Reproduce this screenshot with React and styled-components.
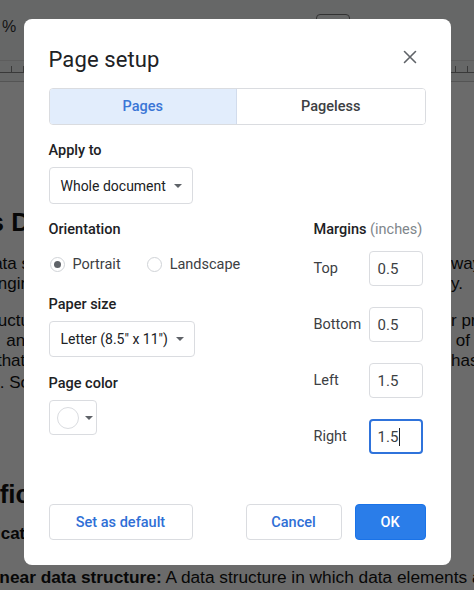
import React from "react";
import styled, { createGlobalStyle } from "styled-components";

const GlobalStyle = createGlobalStyle`
  html, body {
    margin: 0;
    padding: 0;
    background: #fff;
  }
  * {
    box-sizing: border-box;
  }
`;

const Screen = styled.div`
  position: relative;
  width: 474px;
  height: 590px;
  overflow: hidden;
  background: #fff;
  font-family: "Liberation Sans", Arial, sans-serif;
`;

/* ---------- document behind the dialog ---------- */

const Toolbar = styled.div`
  height: 60px;
  background: #f3f5f6;
  display: flex;
  align-items: flex-start;
  padding: 18px 0 0 2px;
  gap: 300px;
  font-size: 16px;
  color: #333;
`;

const ToolButton = styled.div`
  width: 34px;
  height: 24px;
  margin-top: -4px;
  border: 1px solid #777;
  border-radius: 4px;
`;

const Ruler = styled.div`
  height: 22px;
  background: #f3f5f6;
  border-top: 1px solid #ddd;
  border-bottom: 1px solid #c8c8c8;
  position: relative;
  &:after {
    content: "";
    position: absolute;
    left: 0;
    right: 0;
    top: 5px;
    height: 6px;
    border-bottom: 1px solid #888;
    background: repeating-linear-gradient(
      90deg,
      transparent 0 11px,
      #888 11px 12px
    );
  }
`;

const DocBody = styled.div`
  display: flex;
  flex-direction: column;
  color: #111;
  font-size: 17px;
  padding-top: 137px;
`;

const Line = styled.div`
  display: flex;
  justify-content: space-between;
  height: ${(p) => p.h || 20}px;
  margin-top: ${(p) => p.mt || 0}px;
  font-size: ${(p) => p.size || 17}px;
  font-weight: ${(p) => (p.bold ? 700 : 400)};
  line-height: ${(p) => p.h || 20}px;
`;

const LeftBit = styled.span`
  width: 30px;
  display: flex;
  justify-content: flex-end;
  overflow: hidden;
  white-space: pre;
`;

const RightBit = styled.span`
  width: 23px;
  overflow: hidden;
  white-space: pre;
`;

const FullLine = styled.div`
  margin-top: ${(p) => p.mt || 0}px;
  margin-left: -16px;
  white-space: nowrap;
  font-size: 17.3px;
  line-height: 20px;
  b {
    font-weight: 700;
  }
`;

/* ---------- modal ---------- */

const Scrim = styled.div`
  position: absolute;
  inset: 0;
  background: rgba(0, 0, 0, 0.58);
  display: flex;
  justify-content: center;
  align-items: flex-start;
  padding-top: 19px;
`;

const Dialog = styled.div`
  width: 427px;
  height: 546px;
  background: #fff;
  border-radius: 8px;
  padding: 24px 25px 25px;
  display: flex;
  flex-direction: column;
  font-family: Roboto, "Noto Sans", sans-serif;
  color: #202124;
`;

const Header = styled.div`
  display: flex;
  justify-content: space-between;
  align-items: center;
  height: 32px;
`;

const Title = styled.h1`
  margin: 0;
  font-size: 22px;
  font-weight: 400;
  letter-spacing: 0.1px;
`;

const CloseButton = styled.button`
  border: none;
  background: none;
  padding: 0;
  width: 24px;
  height: 24px;
  margin-right: 4px;
  margin-top: -4px;
  display: flex;
  align-items: center;
  justify-content: center;
  cursor: pointer;
`;

const Tabs = styled.div`
  display: grid;
  grid-template-columns: 1fr 1fr;
  height: 37px;
  margin-top: 13px;
  border: 1px solid #dadce0;
  border-radius: 4px;
  overflow: hidden;
`;

const Tab = styled.div`
  display: flex;
  align-items: center;
  justify-content: center;
  font-size: 14.5px;
  font-weight: 500;
  color: ${(p) => (p.active ? "#3a76d6" : "#3c4043")};
  background: ${(p) => (p.active ? "#e2edfc" : "#fff")};
  border-right: ${(p) => (p.active ? "1px solid #d2dcec" : "none")};
`;

const Body = styled.div`
  display: grid;
  grid-template-columns: 265px 1fr;
  margin-top: 16px;
`;

const Column = styled.div`
  display: flex;
  flex-direction: column;
`;

const Label = styled.div`
  font-size: 14.5px;
  font-weight: 500;
  line-height: 20px;
  margin-top: ${(p) => p.mt || 0}px;
  color: #202124;
  span {
    font-weight: 400;
    color: #80868b;
  }
`;

const Select = styled.div`
  display: inline-flex;
  align-self: flex-start;
  align-items: center;
  gap: 8px;
  height: ${(p) => p.h || 37}px;
  margin-top: 6px;
  padding: 0 10px 0 11px;
  border: 1px solid #dadce0;
  border-radius: 4px;
  font-size: 14px;
  color: #202124;
`;

const Caret = styled.span`
  width: 0;
  height: 0;
  border-left: 4px solid transparent;
  border-right: 4px solid transparent;
  border-top: 4px solid #5f6368;
`;

const RadioRow = styled.div`
  display: flex;
  align-items: center;
  height: 20px;
  margin-top: 14px;
  padding-left: 1px;
`;

const RadioOption = styled.label`
  display: flex;
  align-items: center;
  gap: 8px;
  margin-right: 26px;
  font-size: 14.5px;
  color: #3c4043;
`;

const RadioCircle = styled.span`
  width: 15px;
  height: 15px;
  border-radius: 50%;
  border: 1px solid #d0d3d7;
  display: flex;
  align-items: center;
  justify-content: center;
  &:after {
    content: "";
    width: 7px;
    height: 7px;
    border-radius: 50%;
    background: ${(p) => (p.checked ? "#5f6368" : "transparent")};
  }
`;

const ColorButton = styled.div`
  display: flex;
  align-items: center;
  gap: 6px;
  width: 48px;
  height: 35px;
  margin-top: 6px;
  padding-left: 7px;
  border: 1px solid #dadce0;
  border-radius: 4px;
`;

const Swatch = styled.span`
  width: 22px;
  height: 22px;
  border-radius: 50%;
  border: 1px solid #dadce0;
  background: #fff;
`;

const MarginRow = styled.div`
  display: flex;
  align-items: center;
  margin-top: ${(p) => (p.first ? 11 : 21)}px;
`;

const MarginLabel = styled.span`
  width: 55px;
  font-size: 14.5px;
  color: #3c4043;
`;

const Field = styled.div`
  width: 54px;
  height: 35px;
  display: flex;
  align-items: center;
  padding-left: ${(p) => (p.focused ? 7 : 8)}px;
  border: ${(p) => (p.focused ? "2px solid #2f73db" : "1px solid #dadce0")};
  border-radius: 4px;
  font-size: 15px;
  color: #3c4043;
`;

const TextCursor = styled.span`
  width: 1px;
  height: 18px;
  margin-left: 1px;
  background: #202124;
`;

const Footer = styled.div`
  margin-top: auto;
  display: flex;
  align-items: center;
  gap: 13px;
`;

const Button = styled.button`
  height: 36px;
  width: ${(p) => p.w}px;
  border-radius: 4px;
  font-family: Roboto, "Noto Sans", sans-serif;
  font-size: 14.5px;
  font-weight: 500;
  cursor: pointer;
  border: 1px solid ${(p) => (p.primary ? "#1a73e8" : "#dadce0")};
  background: ${(p) => (p.primary ? "#2a7de9" : "#fff")};
  color: ${(p) => (p.primary ? "#fff" : "#2f6fd6")};
  margin-right: ${(p) => (p.push ? "auto" : "0")};
`;

const margins = [
  { label: "Top", value: "0.5" },
  { label: "Bottom", value: "0.5" },
  { label: "Left", value: "1.5" },
  { label: "Right", value: "1.5", focused: true },
];

const App = () => {
  return (
    <>
      <GlobalStyle />
      <Screen>
        <Toolbar>
          <span>%</span>
          <ToolButton />
        </Toolbar>
        <Ruler />
        <DocBody>
          <Line h={30} size={26} bold style={{ marginTop: -12 }}>
            <LeftBit>es D</LeftBit>
            <RightBit />
          </Line>
          <Line mt={17}>
            <LeftBit>data s</LeftBit>
            <RightBit>ways</RightBit>
          </Line>
          <Line>
            <LeftBit>engin</LeftBit>
            <RightBit>y.</RightBit>
          </Line>
          <Line mt={17}>
            <LeftBit>structu</LeftBit>
            <RightBit>r pre</RightBit>
          </Line>
          <Line>
            <LeftBit>{" an "}</LeftBit>
            <RightBit>{" of d"}</RightBit>
          </Line>
          <Line>
            <LeftBit>{" that "}</LeftBit>
            <RightBit>has</RightBit>
          </Line>
          <Line mt={2}>
            <LeftBit>{"ed. So"}</LeftBit>
            <RightBit />
          </Line>
          <Line h={30} size={26} bold mt={86}>
            <LeftBit>{"ific"}</LeftBit>
            <RightBit />
          </Line>
          <Line bold mt={15}>
            <LeftBit>{"icati"}</LeftBit>
            <RightBit />
          </Line>
          <FullLine mt={23}>
            <b>Linear data structure:</b> A data structure in which data elements are
          </FullLine>
        </DocBody>

        <Scrim>
          <Dialog>
            <Header>
              <Title>Page setup</Title>
              <CloseButton aria-label="Close">
                <svg width="14" height="14" viewBox="0 0 14 14">
                  <path
                    d="M1.5 1.5 L12.5 12.5 M12.5 1.5 L1.5 12.5"
                    stroke="#5f6368"
                    strokeWidth="1.6"
                    strokeLinecap="round"
                  />
                </svg>
              </CloseButton>
            </Header>

            <Tabs>
              <Tab active>Pages</Tab>
              <Tab>Pageless</Tab>
            </Tabs>

            <Body>
              <Column>
                <Label>Apply to</Label>
                <Select>
                  Whole document <Caret />
                </Select>

                <Label mt={16}>Orientation</Label>
                <RadioRow>
                  <RadioOption>
                    <RadioCircle checked />
                    Portrait
                  </RadioOption>
                  <RadioOption>
                    <RadioCircle />
                    Landscape
                  </RadioOption>
                </RadioRow>

                <Label mt={21}>Paper size</Label>
                <Select h={36}>
                  Letter (8.5" x 11") <Caret />
                </Select>

                <Label mt={17}>Page color</Label>
                <ColorButton>
                  <Swatch />
                  <Caret />
                </ColorButton>
              </Column>

              <Column>
                <Label mt={79}>
                  Margins <span>(inches)</span>
                </Label>
                {margins.map((m, i) => (
                  <MarginRow key={m.label} first={i === 0}>
                    <MarginLabel>{m.label}</MarginLabel>
                    <Field focused={m.focused}>
                      {m.value}
                      {m.focused && <TextCursor />}
                    </Field>
                  </MarginRow>
                ))}
              </Column>
            </Body>

            <Footer>
              <Button w={144} push>
                Set as default
              </Button>
              <Button w={96}>Cancel</Button>
              <Button w={71} primary>
                OK
              </Button>
            </Footer>
          </Dialog>
        </Scrim>
      </Screen>
    </>
  );
};

export default App;
